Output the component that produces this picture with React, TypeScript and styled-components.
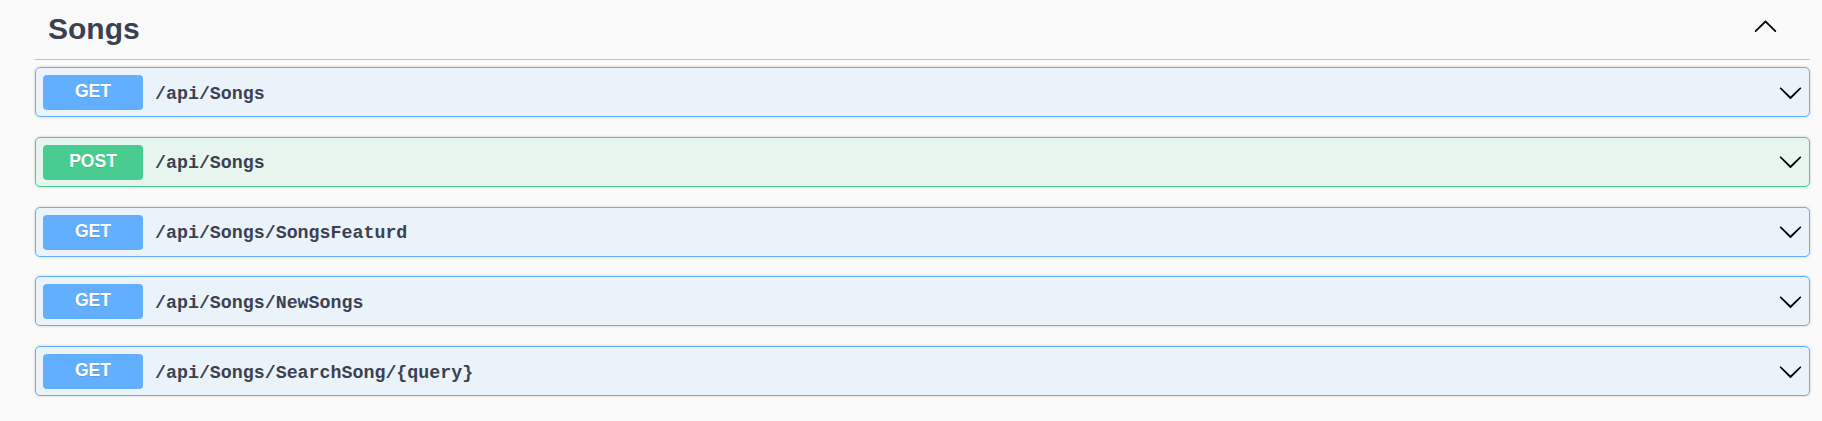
import React from 'react'
import styled, { createGlobalStyle } from 'styled-components'

const GlobalStyle = createGlobalStyle`
  html, body {
    margin: 0;
    padding: 0;
    background: #fafafa;
  }
`

type Method = 'get' | 'post'

const methodColors: Record<Method, string> = {
  get: '#61affe',
  post: '#49cc90',
}

const methodBg: Record<Method, string> = {
  get: 'rgba(97, 175, 254, 0.1)',
  post: 'rgba(73, 204, 144, 0.1)',
}

const Section = styled.section`
  width: 1775px;
  margin-left: 35px;
  font-family: 'Liberation Sans', Arial, sans-serif;
`

const TagHeader = styled.h3`
  display: flex;
  align-items: flex-start;
  justify-content: space-between;
  margin: 0 0 7px;
  padding: 12px 32px 13px 13px;
  border-bottom: 1px solid rgba(59, 65, 81, 0.3);
  font-size: 30px;
  line-height: 34px;
  font-weight: 700;
  color: #3b4151;
`

const ToggleButton = styled.button`
  display: flex;
  margin: 1px 0 0;
  padding: 0;
  border: none;
  background: none;
  cursor: pointer;
  svg {
    width: 25px;
    height: 25px;
    fill: #000;
  }
`

const Block = styled.div<{ $method: Method }>`
  display: flex;
  align-items: center;
  box-sizing: border-box;
  height: 50px;
  margin-bottom: 19.75px;
  padding: 0 6px 0 7px;
  border: 1px solid ${props => methodColors[props.$method]};
  border-radius: 5px;
  background: ${props => methodBg[props.$method]};
  box-shadow: 0 0 3px rgba(0, 0, 0, 0.19);
  cursor: pointer;
`

const MethodBadge = styled.span<{ $method: Method }>`
  display: flex;
  align-items: center;
  justify-content: center;
  box-sizing: border-box;
  width: 100px;
  height: 35px;
  margin-top: 1px;
  padding-bottom: 2px;
  border-radius: 4px;
  background: ${props => methodColors[props.$method]};
  color: #fff;
  font-size: 17.5px;
  font-weight: 700;
  text-shadow: 0 1px 0 rgba(0, 0, 0, 0.1);
`

const Path = styled.span`
  flex: 1;
  padding: 3px 12px 0;
  font-family: 'Liberation Mono', 'Courier New', monospace;
  font-size: 18.3px;
  font-weight: 700;
  color: #3b4151;
`

const Arrow = styled.svg`
  width: 25px;
  height: 25px;
  fill: #000;
  flex-shrink: 0;
`

const ArrowDown = () => (
  <Arrow viewBox="0 0 20 20">
    <path d="M17.418 6.109c.272-.268.709-.268.979 0s.271.701 0 .969l-7.908 7.83c-.27.268-.707.268-.979 0l-7.908-7.83c-.27-.268-.27-.701 0-.969.271-.268.709-.268.979 0L10 13.25l7.418-7.141z" />
  </Arrow>
)

const ArrowUp = () => (
  <svg viewBox="0 0 20 20">
    <path d="M17.418 14.908c.272.268.709.268.979 0s.271-.701 0-.969l-7.908-7.83c-.27-.268-.707-.268-.979 0l-7.908 7.83c-.27.268-.27.701 0 .969.271.268.709.268.979 0L10 7.767l7.418 7.141z" />
  </svg>
)

const endpoints: { method: Method; path: string }[] = [
  { method: 'get', path: '/api/Songs' },
  { method: 'post', path: '/api/Songs' },
  { method: 'get', path: '/api/Songs/SongsFeaturd' },
  { method: 'get', path: '/api/Songs/NewSongs' },
  { method: 'get', path: '/api/Songs/SearchSong/{query}' },
]

const App: React.FC = () => (
  <>
    <GlobalStyle />
    <Section>
      <TagHeader>
        <span>Songs</span>
        <ToggleButton aria-label="collapse">
          <ArrowUp />
        </ToggleButton>
      </TagHeader>
      {endpoints.map((e, i) => (
        <Block key={i} $method={e.method}>
          <MethodBadge $method={e.method}>{e.method.toUpperCase()}</MethodBadge>
          <Path>{e.path}</Path>
          <ArrowDown />
        </Block>
      ))}
    </Section>
  </>
)

export default App
